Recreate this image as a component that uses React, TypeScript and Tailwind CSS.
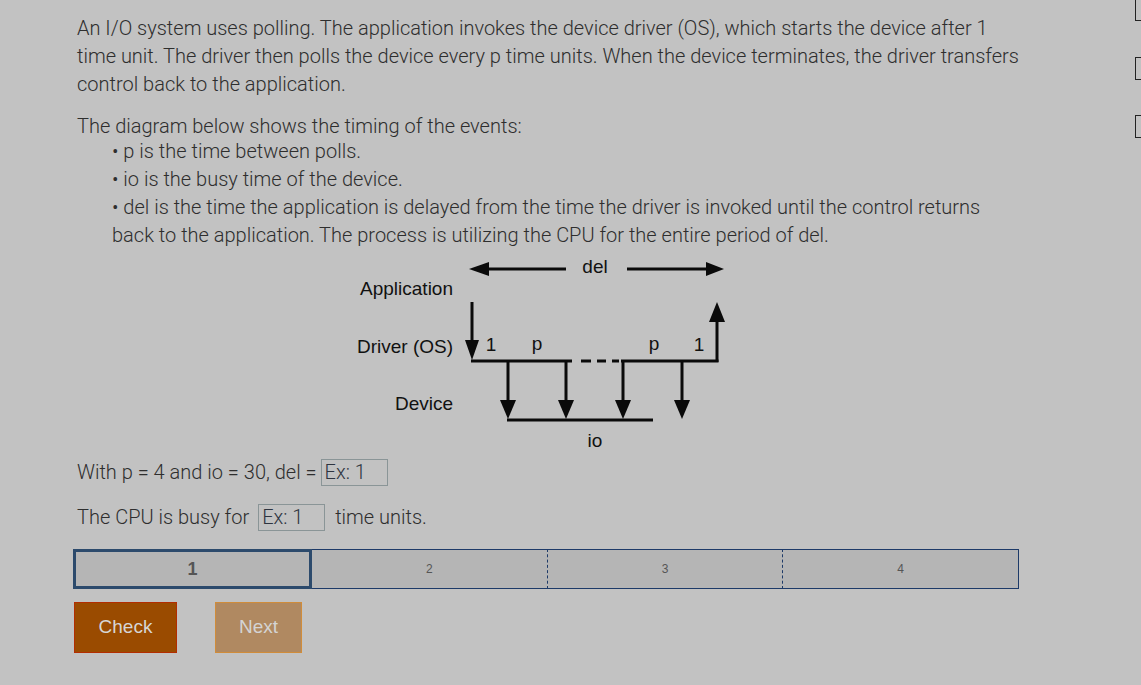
import React from "react";

function TimingDiagram() {
  const polls = [159, 217, 274, 333];
  return (
    <svg width="380" height="202" viewBox="0 0 380 202" className="block" style={{ fontFamily: '"Liberation Sans", Arial, sans-serif' }}>
      <g fill="#111" stroke="none" fontSize="19">
        <text x="246" y="23" textAnchor="middle">del</text>
        <text x="104" y="45" textAnchor="end">Application</text>
        <text x="104" y="103" textAnchor="end">Driver (OS)</text>
        <text x="104" y="160" textAnchor="end">Device</text>
        <text x="142" y="101" textAnchor="middle">1</text>
        <text x="188" y="100" textAnchor="middle">p</text>
        <text x="305" y="100" textAnchor="middle">p</text>
        <text x="350" y="101" textAnchor="middle">1</text>
        <text x="246" y="197" textAnchor="middle">io</text>
      </g>
      <g stroke="#0a0a0a" strokeWidth="3" fill="none">
        <line x1="138" y1="19" x2="217" y2="19" />
        <line x1="278" y1="19" x2="359" y2="19" />
        <line x1="123" y1="52" x2="123" y2="92" />
        <line x1="122" y1="111" x2="223" y2="111" />
        <line x1="232" y1="111" x2="242" y2="111" />
        <line x1="248" y1="111" x2="257" y2="111" />
        <line x1="263" y1="111" x2="270" y2="111" />
        <line x1="272" y1="111" x2="369.5" y2="111" />
        <line x1="368" y1="112" x2="368" y2="70" />
        {polls.map((x) => (
          <line key={x} x1={x} y1="111" x2={x} y2="152" />
        ))}
        <line x1="158" y1="170" x2="304" y2="170" />
      </g>
      <g fill="#0a0a0a">
        <polygon points="120,19 140,12 140,26" />
        <polygon points="375,19 357,12 357,26" />
        <polygon points="116,90 130,90 123,110" />
        <polygon points="360,72 376,72 368,52" />
        {polls.map((x) => (
          <polygon key={x} points={`${x - 8},150 ${x + 8},150 ${x},169`} />
        ))}
      </g>
    </svg>
  );
}

function Answer() {
  return (
    <input
      type="text"
      placeholder="Ex: 1"
      className="h-[27px] w-[67px] border border-[#8a9597] bg-transparent px-[3px] text-[20px] font-light text-[#2e2e2e] placeholder:text-[#2e3440] outline-none"
    />
  );
}

export default function App() {
  const steps = ["1", "2", "3", "4"];
  return (
    <div className="relative min-h-screen w-full overflow-hidden bg-[#c2c2c2] text-[#2e2e2e]" style={{ fontFamily: 'Roboto, "Noto Sans", sans-serif' }}>
      <div className="absolute left-[1135px] top-[-4px] h-[25px] w-[20px] border-y-[1.5px] border-l-[1.5px] border-[#222]" />
      <div className="absolute left-[1135px] top-[57px] h-[23px] w-[20px] border-y-[1.5px] border-l-[1.5px] border-[#222]" />
      <div className="absolute left-[1135px] top-[115px] h-[23px] w-[20px] border-y-[1.5px] border-l-[1.5px] border-[#222]" />

      <div className="ml-[73px] w-[1040px] pt-[14px] text-[20px] font-light leading-[28px]">
        <p className="pl-[4px]">
          An I/O system uses polling. The application invokes the device driver (OS), which starts the device after 1<br />
          time unit. The driver then polls the device every p time units. When the device terminates, the driver transfers<br />
          control back to the application.
        </p>
        <p className="mt-[14px] pl-[4px]">The diagram below shows the timing of the events:</p>
        <ul className="mt-[-3px] pl-[39px]">
          <li>• p is the time between polls.</li>
          <li>• io is the busy time of the device.</li>
          <li>
            • del is the time the application is delayed from the time the driver is invoked until the control returns<br />
            back to the application. The process is utilizing the CPU for the entire period of del.
          </li>
        </ul>

        <div className="ml-[276px] mt-[1px]">
          <TimingDiagram />
        </div>

        <div className="mt-[6px] flex items-center pl-[4px]">
          <span>With p = 4 and io = 30, del =</span>
          <span className="ml-[4px] flex">
            <Answer />
          </span>
        </div>
        <div className="mt-[17px] flex items-center pl-[4px]">
          <span>The CPU is busy for</span>
          <span className="ml-[9px] flex">
            <Answer />
          </span>
          <span className="ml-[10px]">time units.</span>
        </div>
      </div>

      <div className="ml-[73px] mt-[18px] flex h-[40px] w-[946px]" style={{ fontFamily: '"Liberation Sans", Arial, sans-serif' }}>
        {steps.map((s, i) => (
          <div
            key={s}
            className={
              i === 0
                ? "flex w-[239px] items-center justify-center border-[3px] border-[#2c4a6c] bg-[#b5b5b5] text-[18px] font-bold text-[#555]"
                : i === 3
                ? "flex flex-1 items-center justify-center border-y border-r border-l border-[#1d3a68] border-l-dashed bg-[#b5b5b5] text-[12px] text-[#555]"
                : i === 1
                ? "flex flex-1 items-center justify-center border-y border-[#1d3a68] bg-[#b5b5b5] text-[12px] text-[#555]"
                : "flex flex-1 items-center justify-center border-y border-l border-dashed border-[#1d3a68] bg-[#b5b5b5] text-[12px] text-[#555]"
            }
            style={i === 2 ? { borderTopStyle: "solid", borderBottomStyle: "solid" } : i === 3 ? { borderLeftStyle: "dashed" } : undefined}
          >
            {s}
          </div>
        ))}
      </div>

      <div className="ml-[74px] mt-[13px] flex gap-[38px]" style={{ fontFamily: '"Liberation Sans", Arial, sans-serif' }}>
        <button className="h-[51px] w-[103px] border border-[#b32d00] bg-[#9a4b00] text-[19px] text-[#d6d6d6]">Check</button>
        <button className="h-[51px] w-[87px] border border-[#d08c3a] bg-[#b08961] text-[19px] text-[#d4d4d4]">Next</button>
      </div>
    </div>
  );
}
